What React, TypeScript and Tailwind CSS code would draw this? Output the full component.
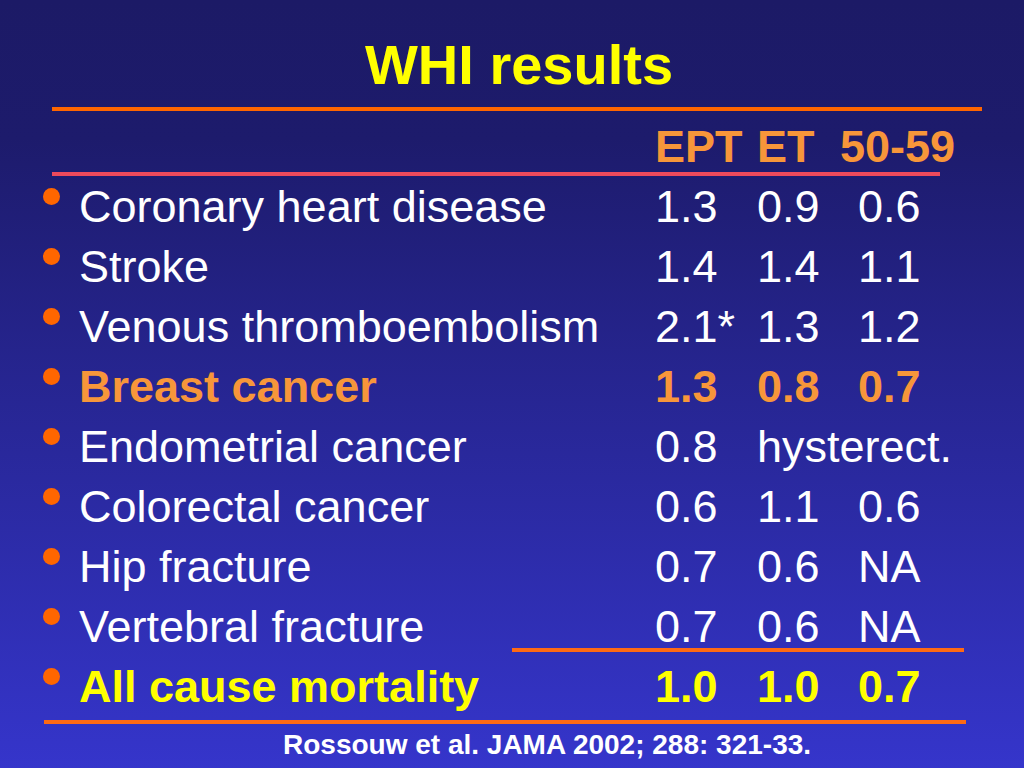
import React from "react";

type Row = {
  label: string;
  vals: string[];
  tone?: "white" | "orange" | "yellow";
  span?: boolean;
};

const rows: Row[] = [
  { label: "Coronary heart disease", vals: ["1.3", "0.9", "0.6"] },
  { label: "Stroke", vals: ["1.4", "1.4", "1.1"] },
  { label: "Venous thromboembolism", vals: ["2.1*", "1.3", "1.2"] },
  { label: "Breast cancer", vals: ["1.3", "0.8", "0.7"], tone: "orange" },
  { label: "Endometrial cancer", vals: ["0.8", "hysterect."], span: true },
  { label: "Colorectal cancer", vals: ["0.6", "1.1", "0.6"] },
  { label: "Hip fracture", vals: ["0.7", "0.6", "NA"] },
  { label: "Vertebral fracture", vals: ["0.7", "0.6", "NA"] },
  { label: "All cause mortality", vals: ["1.0", "1.0", "0.7"], tone: "yellow" },
];

const toneClass = {
  white: "text-white font-normal",
  orange: "text-[#f7963a] font-bold",
  yellow: "text-[#ffff00] font-bold",
};

export default function App() {
  return (
    <div className="w-[1024px] h-[768px] overflow-hidden flex flex-col bg-[linear-gradient(to_bottom,#1c1a66_0%,#1d1b6c_18%,#3535cb_100%)] font-['Liberation_Sans',Arial,sans-serif]">
      <h1 className="pt-[33px] h-[98px] leading-[64px] text-[56px] font-bold text-[#ffff00] text-center pl-[14px]">
        WHI results
      </h1>
      <div className="mt-[9px] ml-[52px] w-[930px] h-[4px] bg-[#ff6600]" />

      {/* column headings */}
      <div className="mt-[10px] h-[51px] leading-[51px] pl-[43px] grid grid-cols-[612px_102px_101px_1fr] text-[45px] font-bold text-[#f7963a]">
        <span />
        <span>EPT</span>
        <span>ET</span>
        <span className="-ml-[18px]">50-59</span>
      </div>
      <div className="ml-[52px] w-[888px] h-[4px] bg-[#ee4a5c]" />

      <div className="pt-[1px] flex flex-col">
        {rows.map((r, i) => (
          <div
            key={r.label}
            className={`relative h-[60px] leading-[60px] pl-[43px] grid grid-cols-[36px_576px_102px_101px_1fr] items-start text-[45px] ${toneClass[r.tone ?? "white"]}`}
          >
            <span className="block mt-[11px] w-[17px] h-[17px] rounded-full bg-[#ff6600]" />
            <span className="whitespace-nowrap">{r.label}</span>
            <span className="whitespace-nowrap">{r.vals[0]}</span>
            {r.span ? (
              <span className="col-span-2 whitespace-nowrap">{r.vals[1]}</span>
            ) : (
              <>
                <span>{r.vals[1]}</span>
                <span>{r.vals[2]}</span>
              </>
            )}
            {i === 7 && (
              <span className="absolute left-[512px] top-[51px] w-[452px] h-[4px] bg-[#ff6a14]" />
            )}
          </div>
        ))}
      </div>

      <div className="mt-[3px] ml-[44px] w-[922px] h-[4px] bg-[#ff6a14]" />
      <p className="mt-[5px] pl-[283px] leading-[32px] text-[28px] font-bold text-white whitespace-nowrap">
        Rossouw et al. JAMA 2002; 288: 321-33.
      </p>
    </div>
  );
}
